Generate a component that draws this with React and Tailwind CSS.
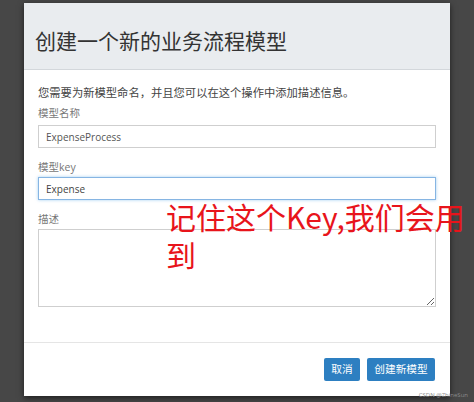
import { useState } from 'react';

const font = { fontFamily: '"Open Sans", "Noto Sans CJK SC", sans-serif' };

export default function App() {
  const [name, setName] = useState('ExpenseProcess');
  const [key, setKey] = useState('Expense');

  return (
    <div className="relative h-[402px] w-[474px] overflow-hidden bg-[#474747]" style={font}>
      <div className="ml-[24px] mt-[3px] w-[426px] bg-white shadow-[0_2px_6px_rgba(0,0,0,0.6)]">
        {/* Header */}
        <div className="h-[67px] border-b border-[#d3d7db] bg-[#e9ecef] pl-[11px] pt-[22px]">
          <h1 className="text-[21px] leading-[32px] font-normal text-[#333]">创建一个新的业务流程模型</h1>
        </div>

        {/* Body */}
        <div className="h-[272px] px-[14px] pt-[14px]">
          <p className="mb-[2px] text-[11.3px] leading-[18px] text-[#444]">
            您需要为新模型命名，并且您可以在这个操作中添加描述信息。
          </p>
          <label className="mb-[3px] block h-[18px] text-[10.5px] leading-[18px] text-[#777]">模型名称</label>
          <input
            value={name}
            onChange={(e) => setName(e.target.value)}
            className="mb-[10px] block h-[23px] w-[398px] border border-[#cfcfcf] px-[7px] text-[10px] text-[#555] outline-none"
          />
          <label className="mb-[1px] block h-[18px] text-[10.5px] leading-[18px] text-[#777]">模型key</label>
          <input
            value={key}
            onChange={(e) => setKey(e.target.value)}
            className="mb-[10px] block h-[23px] w-[398px] border border-[#86b5e3] px-[7px] text-[10px] text-[#444] shadow-[0_0_3px_rgba(102,175,233,0.6)] outline-none"
          />
          <label className="mb-[1px] block h-[18px] text-[10.5px] leading-[18px] text-[#777]">描述</label>
          <textarea className="block h-[78px] w-[398px] resize-y border border-[#cfcfcf] px-[7px] text-[10px] outline-none" />
        </div>

        {/* Footer */}
        <div className="flex h-[54px] items-center justify-end gap-[7px] border-t border-[#e5e5e5] pr-[15px]">
          <button className="h-[23px] w-[36px] rounded-[2px] bg-[#2d7fc1] text-[10.7px] text-white">取消</button>
          <button className="h-[23px] w-[68px] rounded-[2px] bg-[#2d7fc1] text-[10.7px] text-white">创建新模型</button>
        </div>
      </div>

      {/* annotation */}
      <div
        className="absolute left-[166px] top-[197px] w-[310px] text-[30px] leading-[38px] text-[#e8141b]"
        style={{ fontFamily: '"Noto Sans CJK SC", sans-serif' }}
      >
        记住这个Key,我们会用到
      </div>

      <div className="absolute bottom-[2px] right-[6px] text-[6px] text-[#8a8a8a]">CSDN @ZhineSun</div>
    </div>
  );
}
